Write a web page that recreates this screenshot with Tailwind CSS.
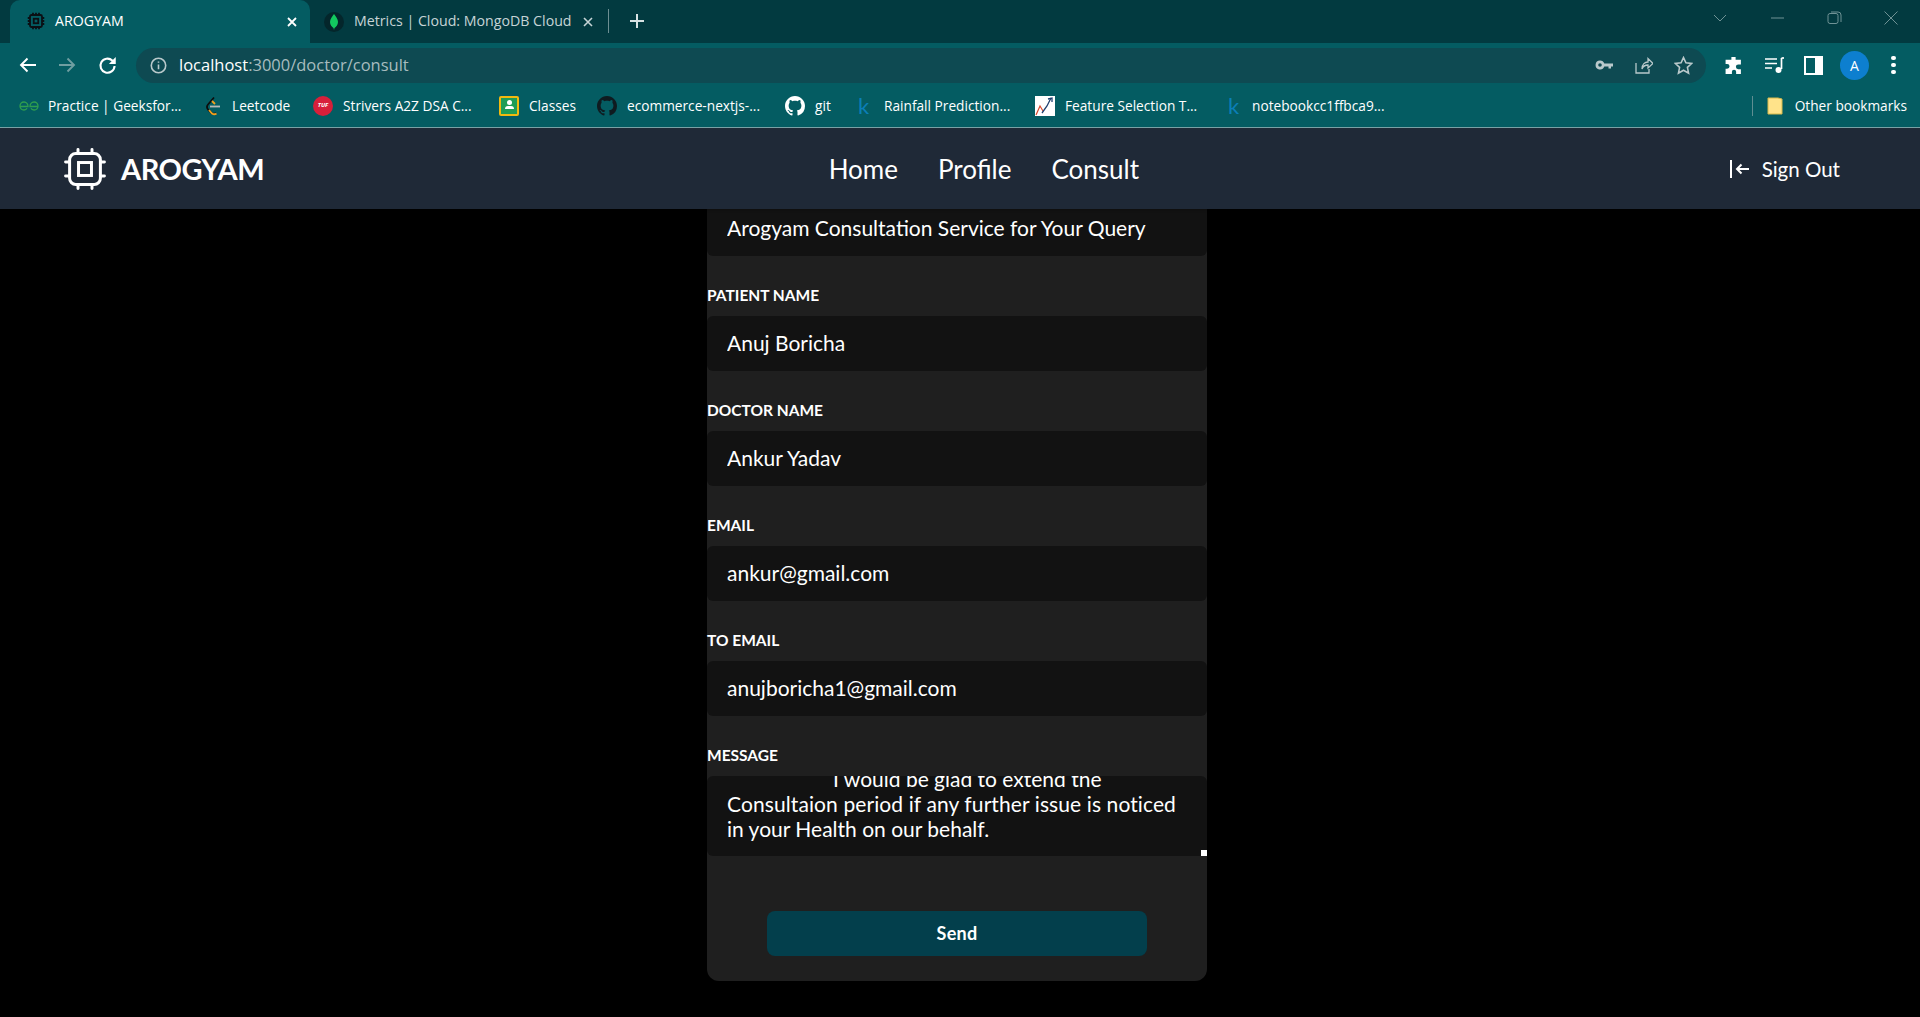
<!DOCTYPE html>
<html lang="en">
<head>
  <meta charset="UTF-8" />
  <title>AROGYAM</title>
  <script src="https://cdn.jsdelivr.net/npm/@tailwindcss/browser@4"></script>
</head>
<body class="bg-black font-['Lato',sans-serif] text-white">
<div class="w-[1920px] h-[1017px] flex flex-col overflow-hidden">

  <!-- browser tabs -->
  <div class="h-[43px] shrink-0 bg-[#023a40] flex font-['Open_Sans',sans-serif] text-[14.200px]">
    <div class="ml-[10px] w-[300px] h-[43px] bg-[#045c62] rounded-t-[10px] flex items-center pl-[17px] pr-[12px]">
      <svg class="w-[18px] h-[18px] shrink-0 mb-[1px]" viewBox="0 0 24 24" fill="none" stroke="#0b0f14" stroke-width="2.4"><rect x="4" y="4" width="16" height="16" rx="2"/><rect x="9" y="9" width="6" height="6"/><path d="M8 1v3M12 1v3M16 1v3M8 20v3M12 20v3M16 20v3M1 8h3M1 12h3M1 16h3M20 8h3M20 12h3M20 16h3"/></svg>
      <span class="ml-[10px] grow mb-[1px]">AROGYAM</span>
      <svg class="w-[12px] h-[12px]" viewBox="0 0 12 12" stroke="#fff" stroke-width="1.8"><path d="M2 2l8 8M10 2l-8 8"/></svg>
    </div>
    <div class="w-[298px] h-[43px] flex items-center pl-[14px] text-[#c6d4d6]">
      <span class="w-[20px] h-[20px] rounded-full bg-[#04262b] flex items-center justify-center shrink-0">
        <svg class="w-[8px] h-[16px]" viewBox="0 0 8 16"><path d="M4 0c2 3 4 5 4 8s-2 5-3.500 6l-.5 2-.5-2C2 13 0 11 0 8s2-5 4-8z" fill="#12c95f"/></svg>
      </span>
      <span class="ml-[10px] w-[228px] mb-[1px] whitespace-nowrap">Metrics | Cloud: MongoDB Cloud</span>
      <svg class="w-[12px] h-[12px] shrink-0" viewBox="0 0 12 12" stroke="#c6d4d6" stroke-width="1.6"><path d="M2 2l8 8M10 2l-8 8"/></svg>
    </div>
    <div class="w-px h-[24px] bg-[#6d8f93] mt-[9px]"></div>
    <svg class="w-[16px] h-[16px] ml-[20px] mt-[13px]" viewBox="0 0 16 16" stroke="#d7e2e3" stroke-width="2"><path d="M8 1v14M1 8h14"/></svg>
    <div class="ml-auto flex items-start pr-[21px] pt-[11px] gap-[41px]">
      <svg class="w-[16px] h-[14px]" viewBox="0 0 16 14" fill="none" stroke="#6f9295" stroke-width="1"><path d="M2 4l6 6 6-6"/></svg>
      <svg class="w-[16px] h-[14px]" viewBox="0 0 16 14" fill="none" stroke="#6f9295" stroke-width="1"><path d="M2 7h13"/></svg>
      <svg class="w-[16px] h-[14px]" viewBox="0 0 16 14" fill="none" stroke="#6f9295" stroke-width="1"><rect x="2" y="2.500" width="10" height="10" rx="2"/><path d="M5 1h7a3 3 0 0 1 3 3v7"/></svg>
      <svg class="w-[16px] h-[14px]" viewBox="0 0 16 14" fill="none" stroke="#6f9295" stroke-width="1"><path d="M1.500 .500l13 13M14.500 .500l-13 13"/></svg>
    </div>
  </div>

  <!-- address bar -->
  <div class="h-[44px] shrink-0 bg-[#045c62] flex items-center">
    <svg class="w-[18px] h-[18px] ml-[19px]" viewBox="0 0 18 18" fill="none" stroke="#fff" stroke-width="1.900"><path d="M17 9H2M8.500 2.500L2 9l6.500 6.500"/></svg>
    <svg class="w-[18px] h-[18px] ml-[21px]" viewBox="0 0 18 18" fill="none" stroke="#6f9ea1" stroke-width="1.900"><path d="M1 9h15M9.500 2.500L16 9l-6.500 6.500"/></svg>
    <svg class="w-[19px] h-[19px] ml-[22px]" viewBox="0 0 18 18" fill="none" stroke="#fff" stroke-width="2"><path d="M15.700 9.500a6.700 6.700 0 1 1-2.200-5.300L15.500 6"/><path d="M16.800 1v6.500H10.300z" fill="#fff" stroke="none"/></svg>
    <div class="ml-[19px] w-[1570px] h-[35px] bg-[#0e4a52] rounded-full flex items-center font-['Open_Sans',sans-serif] text-[16.500px]">
      <svg class="w-[17px] h-[17px] ml-[14px]" viewBox="0 0 16 16" fill="none" stroke="#b9c9cb" stroke-width="1.500"><circle cx="8" cy="8" r="6.800"/><path d="M8 7v4.500M8 4.200v1.300"/></svg>
      <span class="ml-[12px]">localhost<span class="text-[#a7bcbf]">:3000/doctor/consult</span></span>
      <div class="ml-auto flex items-center pr-[13px]">
        <svg class="w-[18px] h-[18px]" viewBox="0 0 18 18" fill="#b9c9cb"><path d="M5 4.500a4.500 4.500 0 0 1 4.300 3H18v3h-2v2h-2.500v-2h-4.200A4.500 4.500 0 1 1 5 4.500zM5 7.200a1.800 1.800 0 1 0 0 3.600 1.800 1.800 0 0 0 0-3.600z"/></svg>
        <svg class="w-[18px] h-[18px] ml-[22px]" viewBox="0 0 18 18" fill="none" stroke="#b9c9cb" stroke-width="1.300"><path d="M1 7v10h13v-4M7 13c0-5 3-7 6-7V2.500L18 7.500l-5 4.500V9c-3 0-5 1-6 4z"/></svg>
        <svg class="w-[19px] h-[19px] ml-[21px]" viewBox="0 0 18 18" fill="none" stroke="#b9c9cb" stroke-width="1.500"><path d="M9 1.500l2.300 5 5.400.6-4 3.700 1.100 5.400L9 13.500l-4.800 2.700 1.100-5.400-4-3.700 5.400-.6z"/></svg>
      </div>
    </div>
    <svg class="w-[19px] h-[19px] ml-[18px]" viewBox="0 0 18 18" fill="#fff"><path d="M7 1h4v2.500h5V8h-2.500a2 2 0 0 0 0 4.500H16V17h-4.500v-2a2 2 0 0 0-4 0v2H1.500v-5H3a2 2 0 0 0 0-4.500H1.500V3.500H7z"/></svg>
    <svg class="w-[20px] h-[18px] ml-[21px]" viewBox="0 0 20 18" fill="none" stroke="#fff" stroke-width="1.700"><path d="M1 3h12M1 7.500h12M1 12h7M17.500 2v11"/><circle cx="14.500" cy="14" r="3" fill="#fff" stroke="none"/><path d="M17.500 2H20" /></svg>
    <div class="w-[19px] h-[19px] ml-[20px] border-[2.500px] border-white bg-[#045c62] flex justify-end"><div class="w-[6px] bg-white"></div></div>
    <div class="w-[29px] h-[29px] ml-[17px] rounded-full bg-[#0d7fcf] flex items-center justify-center text-[14px] font-['Open_Sans',sans-serif]">A</div>
    <div class="ml-[22px] flex flex-col gap-[2.500px]">
      <div class="w-[4.500px] h-[4.500px] rounded-full bg-white"></div>
      <div class="w-[4.500px] h-[4.500px] rounded-full bg-white"></div>
      <div class="w-[4.500px] h-[4.500px] rounded-full bg-white"></div>
    </div>
  </div>

  <!-- bookmarks -->
  <div class="h-[41px] shrink-0 bg-[#045c62] border-b border-[#7aa4a8] flex items-center font-['Open_Sans',sans-serif] text-[13.700px] whitespace-nowrap pb-[2px]">
    <div class="w-[205px] pl-[19px] flex items-center">
      <svg class="w-[20px] h-[10px] shrink-0" viewBox="0 0 20 10" fill="none" stroke="#2f9e4f" stroke-width="1.300"><path d="M1 5.500h8C9 3 7.500 1 5 1S1 3 1 5s1.500 4 4 4c1.500 0 2.500-.7 3-1.700M19 5.500h-8c0-2.500 1.500-4.500 4-4.500s4 2 4 4-1.500 4-4 4c-1.500 0-2.500-.7-3-1.700"/></svg>
      <span class="ml-[9px]">Practice | Geeksfor...</span>
    </div>
    <div class="w-[108px] flex items-center">
      <svg class="w-[16px] h-[20px] shrink-0" viewBox="0 0 16 20" fill="none" stroke-width="1.800"><path d="M9 1.500L3 8.500c-1.500 1.800-1 4 .5 5.500l3 3c1.500 1.300 3 1 4.500 0" stroke="#0d0d0d"/><path d="M5 10.500h10" stroke="#b8b8b8"/><path d="M7 5l3 3M4 14l3 3.500c1.500 1 3 1 4.500 0" stroke="#f0a11f"/></svg>
      <span class="ml-[11px]">Leetcode</span>
    </div>
    <div class="w-[186px] flex items-center">
      <span class="w-[20px] h-[20px] shrink-0 rounded-full bg-[#d81f3a] flex items-center justify-center text-[6px] font-bold italic">TUF</span>
      <span class="ml-[10px]">Strivers A2Z DSA C...</span>
    </div>
    <div class="w-[98px] flex items-center">
      <span class="w-[20px] h-[20px] shrink-0 rounded-[2px] bg-[#f2b90f] p-[2px]"><span class="w-full h-full bg-[#1f9d55] flex flex-col items-center pt-[2px]"><span class="w-[5px] h-[5px] rounded-full bg-white"></span><span class="w-[9px] h-[3px] bg-white rounded-t-[3px] mt-[1px]"></span></span></span>
      <span class="ml-[10px]">Classes</span>
    </div>
    <div class="w-[188px] flex items-center">
      <svg class="w-[20px] h-[20px] shrink-0" viewBox="0 0 16 16" fill="#0f1b20"><path d="M8 0C3.580 0 0 3.580 0 8c0 3.540 2.290 6.530 5.470 7.590.4.070.55-.17.55-.38 0-.19-.01-.82-.01-1.490-2.010.370-2.530-.49-2.690-.94-.09-.23-.48-.94-.82-1.130-.28-.15-.68-.52-.01-.53.630-.01 1.080.58 1.230.82.720 1.210 1.870.870 2.330.660.070-.52.280-.87.510-1.070-1.780-.2-3.640-.89-3.640-3.950 0-.87.310-1.590.820-2.150-.08-.2-.36-1.020.08-2.120 0 0 .67-.21 2.200.820.640-.18 1.320-.27 2-.27s1.360.090 2 .270c1.530-1.040 2.200-.82 2.200-.82.440 1.100.160 1.920.080 2.120.510.560.820 1.270.820 2.150 0 3.070-1.870 3.750-3.650 3.950.290.250.540.730.540 1.480 0 1.070-.01 1.930-.01 2.200 0 .21.150.46.550.380A8.010 8.010 0 0 0 16 8c0-4.420-3.580-8-8-8z"/></svg>
      <span class="ml-[10px]">ecommerce-nextjs-...</span>
    </div>
    <div class="w-[73px] flex items-center">
      <svg class="w-[20px] h-[20px] shrink-0" viewBox="0 0 16 16" fill="#fff"><path d="M8 0C3.580 0 0 3.580 0 8c0 3.540 2.290 6.530 5.470 7.590.4.070.55-.17.55-.38 0-.19-.01-.82-.01-1.490-2.010.370-2.530-.49-2.690-.94-.09-.23-.48-.94-.82-1.130-.28-.15-.68-.52-.01-.53.630-.01 1.080.58 1.230.82.720 1.210 1.870.870 2.330.660.070-.52.280-.87.510-1.070-1.780-.2-3.640-.89-3.640-3.950 0-.87.310-1.590.820-2.150-.08-.2-.36-1.020.08-2.120 0 0 .67-.21 2.200.820.640-.18 1.320-.27 2-.27s1.360.090 2 .270c1.530-1.040 2.200-.82 2.200-.82.440 1.100.160 1.920.080 2.120.510.560.820 1.270.820 2.150 0 3.070-1.870 3.750-3.650 3.950.290.250.540.730.540 1.480 0 1.070-.01 1.930-.01 2.200 0 .21.150.46.550.380A8.010 8.010 0 0 0 16 8c0-4.420-3.580-8-8-8z"/></svg>
      <span class="ml-[10px]">git</span>
    </div>
    <div class="w-[177px] flex items-center">
      <span class="w-[12px] shrink-0 text-[#0b7fb8] text-[22px] leading-[20px] font-['Lato',sans-serif]">k</span>
      <span class="ml-[14px]">Rainfall Prediction...</span>
    </div>
    <div class="w-[193px] flex items-center">
      <svg class="w-[20px] h-[20px] shrink-0 bg-white" viewBox="0 0 20 20" fill="none"><path d="M1 19l4-9 3 5" stroke="#d9482b" stroke-width="1.200"/><path d="M7 17l5-7 4-8" stroke="#20406f" stroke-width="1.300"/><path d="M13 3l4-1v4" stroke="#20406f" stroke-width="1.300"/></svg>
      <span class="ml-[10px]">Feature Selection T...</span>
    </div>
    <div class="flex items-center">
      <span class="w-[12px] shrink-0 text-[#0b7fb8] text-[22px] leading-[20px] font-['Lato',sans-serif]">k</span>
      <span class="ml-[12px]">notebookcc1ffbca9...</span>
    </div>
    <div class="ml-auto flex items-center pr-[13px]">
      <div class="w-px h-[20px] bg-[#5f8e92]"></div>
      <svg class="w-[16px] h-[18px] ml-[14px]" viewBox="0 0 16 18" fill="#ffe38a" stroke="#d7b84a" stroke-width="1"><path d="M1 1h10l4 1v15H1z"/></svg>
      <span class="ml-[12px]">Other bookmarks</span>
    </div>
  </div>

  <!-- navbar -->
  <nav class="h-[81px] shrink-0 bg-[#1f2937] flex items-center justify-between relative z-10 pl-[64px] pr-[80px] shadow-sm">
    <div class="flex items-center">
      <svg class="w-[42px] h-[42px]" viewBox="0 0 24 24" fill="none" stroke="#fff" stroke-width="1.700" stroke-linecap="round"><rect x="3.200" y="3.200" width="17.600" height="17.600" rx="3.500"/><rect x="8.300" y="8.300" width="7.400" height="7.400"/><path d="M8 .9v2.300M16 .9v2.300M8 20.800v2.300M16 20.800v2.300M.9 8h2.300M.9 16h2.300M20.800 8h2.300M20.800 16h2.300"/></svg>
      <span class="ml-[15px] text-[29px] font-bold tracking-[-0.5px]">AROGYAM</span>
    </div>
    <div class="flex gap-[40px] text-[26px] ml-[-25px] pt-[2px]">
      <a href="#">Home</a>
      <a href="#">Profile</a>
      <a href="#">Consult</a>
    </div>
    <div class="flex items-center text-[20.500px]">
      <svg class="w-[20px] h-[18px]" viewBox="0 0 20 18" fill="none" stroke="#fff" stroke-width="2"><path d="M2 0v18M20 9H8M12.500 4.500L8 9l4.500 4.500"/></svg>
      <span class="ml-[13px] pt-[1px]">Sign Out</span>
    </div>
  </nav>

  <!-- consult form -->
  <main class="grow overflow-hidden flex justify-center">
    <form class="w-[500px] h-[780px] mt-[-8px] mr-[6px] shrink-0 bg-[#1f1f1f] rounded-[12px] flex flex-col text-[21px]">
      <input class="h-[55px] shrink-0 bg-[#121212] rounded-[6px] px-[20px] pb-[3px]" value="Arogyam Consultation Service for Your Query" />
      <label class="mt-[28px] h-[32px] text-[15.500px] font-bold">PATIENT NAME</label>
      <input class="h-[55px] shrink-0 bg-[#121212] rounded-[6px] px-[20px] pb-[3px]" value="Anuj Boricha" />
      <label class="mt-[28px] h-[32px] text-[15.500px] font-bold">DOCTOR NAME</label>
      <input class="h-[55px] shrink-0 bg-[#121212] rounded-[6px] px-[20px] pb-[3px]" value="Ankur Yadav" />
      <label class="mt-[28px] h-[32px] text-[15.500px] font-bold">EMAIL</label>
      <input class="h-[55px] shrink-0 bg-[#121212] rounded-[6px] px-[20px] pb-[3px]" value="ankur@gmail.com" />
      <label class="mt-[28px] h-[32px] text-[15.500px] font-bold">TO EMAIL</label>
      <input class="h-[55px] shrink-0 bg-[#121212] rounded-[6px] px-[20px] pb-[3px]" value="anujboricha1@gmail.com" />
      <label class="mt-[28px] h-[32px] text-[15.500px] font-bold">MESSAGE</label>
      <div class="h-[80px] shrink-0 relative">
        <div class="h-full bg-[#121212] rounded-[6px] px-[20px] pb-[15px] leading-[25px] overflow-hidden flex flex-col justify-end">
          <p class="pl-[106px] whitespace-nowrap">I would be glad to extend the</p>
          <p class="whitespace-nowrap tracking-[0.1px]">Consultaion period if any further issue is noticed</p>
          <p class="whitespace-nowrap">in your Health on our behalf.</p>
        </div>
        <div class="absolute right-0 bottom-0 w-[6px] h-[6px] bg-white border border-white"></div>
      </div>
      <button type="button" class="mt-[55px] mx-auto w-[380px] h-[45px] pb-[1px] bg-[#033f4c] rounded-[8px] text-[18px] font-bold tracking-[0.3px]">Send</button>
    </form>
  </main>
</div>
</body>
</html>
